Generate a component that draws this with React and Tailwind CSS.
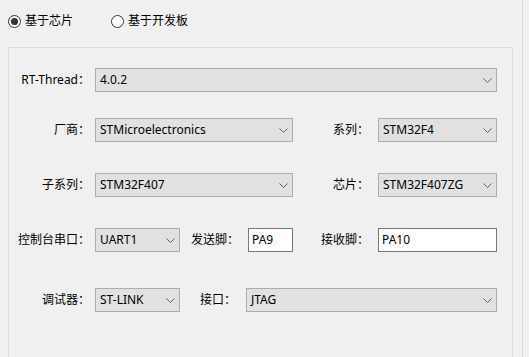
import React from 'react';

const font = { fontFamily: '"Noto Sans", "Noto Sans CJK SC", sans-serif' };

const Chevron = () => (
  <svg width="9" height="5" viewBox="0 0 9 5" className="shrink-0">
    <polyline points="0.5,0.5 4.5,4.5 8.5,0.5" fill="none" stroke="#606060" strokeWidth="1" />
  </svg>
);

const Combo = ({ value, w }) => (
  <div className={`${w} h-[24px] shrink-0 flex items-center justify-between pl-[4px] pr-[4px] bg-[#e1e1e1] border border-[#adadad] text-black`}>
    <span className="leading-none">{value}</span>
    <Chevron />
  </div>
);

const Input = ({ value, w }) => (
  <div className={`${w} h-[24px] shrink-0 flex items-center pl-[3px] bg-white border border-[#7a7a7a] text-black`}>
    <span className="leading-none">{value}</span>
  </div>
);

const Label = ({ children, w }) => (
  <div className={`${w} shrink-0 text-right leading-none text-black whitespace-nowrap`}>{children}</div>
);

const Radio = ({ checked, label }) => (
  <div className="flex items-center">
    <div className="w-[13px] h-[13px] rounded-full border border-[#333333] bg-white flex items-center justify-center">
      {checked && <div className="w-[7px] h-[7px] rounded-full bg-[#333333]" />}
    </div>
    <span className="ml-[4px] leading-none text-black">{label}</span>
  </div>
);

export default function App() {
  return (
    <div className="w-[529px] h-[357px] bg-[#f0f0f0] overflow-hidden flex text-[12px]" style={font}>
      <div className="w-[522px] shrink-0">
        <div className="mt-[14px] h-[14px] pl-[8px] flex items-center gap-[38px]">
          <Radio checked label="基于芯片" />
          <Radio label="基于开发板" />
        </div>

        <div className="ml-[8px] mt-[19px] w-[505px] h-[400px] border border-[#dcdcdc] pt-[20px]">
          <div className="flex items-center">
            <Label w="w-[81px]">RT-Thread：</Label>
            <div className="ml-[5px]"><Combo value="4.0.2" w="w-[402px]" /></div>
          </div>

          <div className="flex items-center mt-[26px]">
            <Label w="w-[81px]">厂商：</Label>
            <div className="ml-[5px]"><Combo value="STMicroelectronics" w="w-[198px]" /></div>
            <Label w="w-[76px]">系列：</Label>
            <div className="ml-[9px]"><Combo value="STM32F4" w="w-[119px]" /></div>
          </div>

          <div className="flex items-center mt-[31px]">
            <Label w="w-[81px]">子系列：</Label>
            <div className="ml-[5px]"><Combo value="STM32F407" w="w-[198px]" /></div>
            <Label w="w-[76px]">芯片：</Label>
            <div className="ml-[9px]"><Combo value="STM32F407ZG" w="w-[119px]" /></div>
          </div>

          <div className="flex items-center mt-[31px]">
            <Label w="w-[81px]">控制台串口：</Label>
            <div className="ml-[5px]"><Combo value="UART1" w="w-[85px]" /></div>
            <div className="ml-[11px]"><Label w="w-[48px]">发送脚：</Label></div>
            <div className="ml-[9px]"><Input value="PA9" w="w-[45px]" /></div>
            <Label w="w-[76px]">接收脚：</Label>
            <div className="ml-[9px]"><Input value="PA10" w="w-[119px]" /></div>
          </div>

          <div className="flex items-center mt-[36px]">
            <Label w="w-[81px]">调试器：</Label>
            <div className="ml-[5px]"><Combo value="ST-LINK" w="w-[85px]" /></div>
            <div className="ml-[20px]"><Label w="w-[36px]">接口：</Label></div>
            <div className="ml-[10px]"><Combo value="JTAG" w="w-[251px]" /></div>
          </div>
        </div>
      </div>
      <div className="w-px h-full bg-[#dadada]" />
    </div>
  );
}
